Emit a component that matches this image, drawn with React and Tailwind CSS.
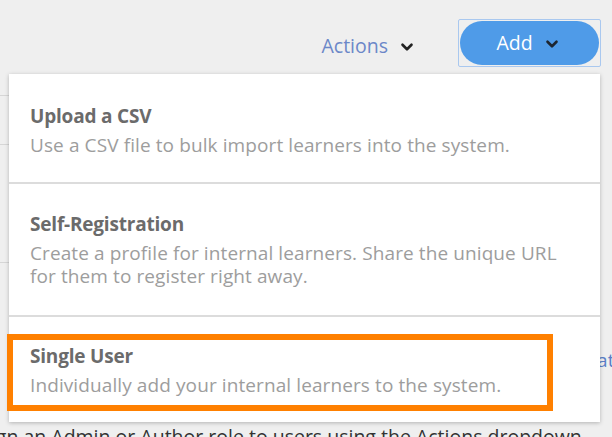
import React from 'react';
import { ChevronDown } from 'lucide-react';

const OPTIONS = [
  {
    id: 'csv',
    title: 'Upload a CSV',
    lines: ['Use a CSV file to bulk import learners into the system.'],
    pad: 'pt-[30px] pb-[25px] border-b-2 border-[#dcdcdc]',
  },
  {
    id: 'self',
    title: 'Self-Registration',
    lines: [
      'Create a profile for internal learners. Share the unique URL',
      'for them to register right away.',
    ],
    pad: 'pt-[28px] pb-[27px] border-b-2 border-[#dcdcdc]',
  },
  {
    id: 'single',
    title: 'Single User',
    lines: ['Individually add your internal learners to the system.'],
    pad: 'pt-[27px] pb-[25px]',
  },
];

function AddMenu() {
  return (
    <div className="absolute left-[9px] top-[74px] w-[591px] bg-white shadow-[0_1px_4px_rgba(0,0,0,0.25)]">
      {OPTIONS.map((opt) => (
        <div key={opt.id} className={`px-[21px] ${opt.pad}`}>
          <p className="text-[19px] leading-[24px] font-bold text-[#6b6b6b] tracking-[-0.2px]">{opt.title}</p>
          <p className="mt-[6px] text-[19px] leading-[23px] text-[#9d9d9d] tracking-[0.1px]">
            {opt.lines.map((line, j) => (
              <React.Fragment key={j}>
                {j > 0 && <br />}
                {line}
              </React.Fragment>
            ))}
          </p>
        </div>
      ))}
    </div>
  );
}

export default function App() {
  return (
    <div className="relative w-[612px] h-[437px] overflow-hidden bg-[#efefef] font-['Open_Sans',sans-serif]">
      {/* Header */}
      <div className="h-[95px] flex justify-end items-start pt-[19px] pr-[11px]">
        <button className="flex items-center gap-[10px] mt-[12px] mr-[42px] text-[19.5px] text-[#6b87c8]">
          Actions
          <ChevronDown size={18} strokeWidth={3.5} className="text-[#222] mt-[2px]" />
        </button>
        <div className="w-[143px] h-[48px] border-[1.5px] border-[#a9c8ef] rounded-[2px] p-[1px]">
          <button className="w-full h-full rounded-full bg-[#4f9be8] flex items-center justify-center gap-[10px] text-[19.5px] text-white pr-[2px]">
            Add
            <ChevronDown size={18} strokeWidth={3.5} className="text-[#1d2530] mt-[2px]" />
          </button>
        </div>
      </div>

      {/* Page behind the menu */}
      <div className="border-t border-[#d6d6d6] h-[49px] mr-[30px]" />
      <div className="border-t border-[#d6d6d6] h-[118px] mr-[30px]" />
      <div className="border-t border-[#d6d6d6] h-[84px] mr-[30px]" />
      <div className="flex justify-end h-[79px]">
        <span className="text-[19px] text-[#5b7fc7] -mr-[13px]">Data</span>
      </div>
      <p className="text-[19.5px] leading-[24px] text-[#333] whitespace-nowrap -ml-[40px]">
        Assign an Admin or Author role to users using the Actions dropdown
      </p>

      <AddMenu />

      {/* Highlight annotation */}
      <div className="absolute left-[7px] top-[334px] w-[546px] h-[77px] border-[6px] border-[#ff8000]" />
    </div>
  );
}
